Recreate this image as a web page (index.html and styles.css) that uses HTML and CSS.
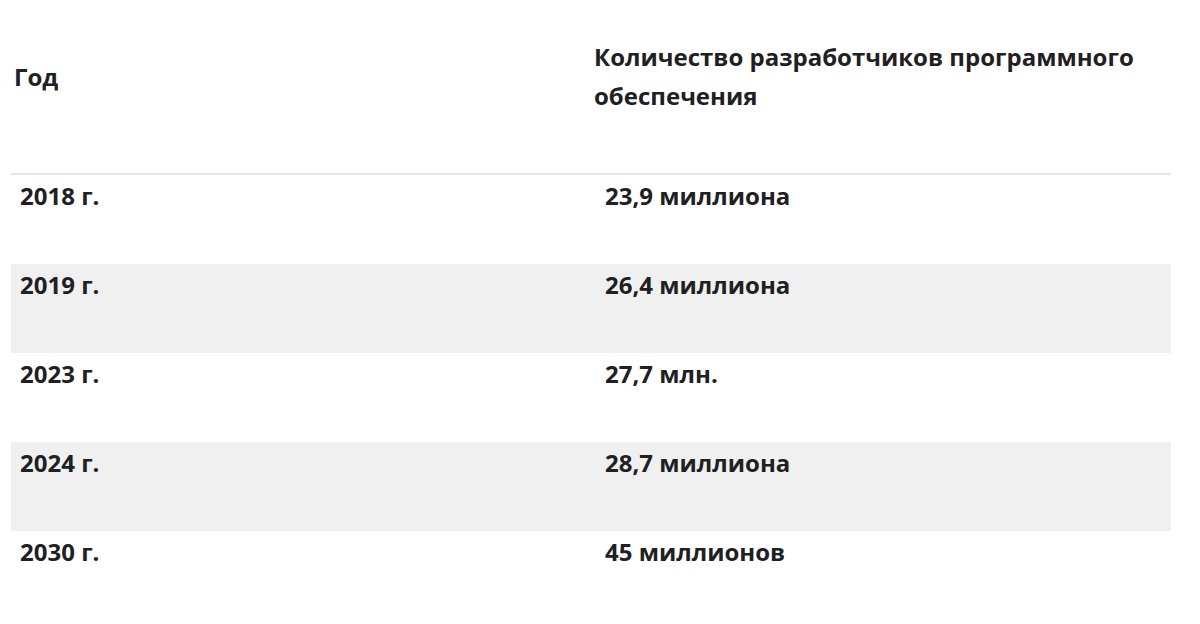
FILE: index.html
```html
<!DOCTYPE html>
<html lang="ru">
<head>
<meta charset="utf-8">
<title>Разработчики</title>
<link rel="stylesheet" href="styles.css">
</head>
<body>
<div class="wrap">
<table class="devs">
  <thead>
    <tr>
      <th class="c1">Год</th>
      <th class="c2">Количество разработчиков программного обеспечения</th>
    </tr>
  </thead>
  <tbody>
    <tr><td class="c1">2018 г.</td><td class="c2">23,9 миллиона</td></tr>
    <tr class="alt"><td class="c1">2019 г.</td><td class="c2">26,4 миллиона</td></tr>
    <tr><td class="c1">2023 г.</td><td class="c2">27,7 млн.</td></tr>
    <tr class="alt"><td class="c1">2024 г.</td><td class="c2">28,7 миллиона</td></tr>
    <tr><td class="c1">2030 г.</td><td class="c2">45 миллионов</td></tr>
  </tbody>
</table>
</div>
</body>
</html>
```
FILE: styles.css
```css
html, body {
  margin: 0;
  padding: 0;
  background: #fff;
}
.wrap {
  padding-left: 11px;
}
.devs {
  width: 1160px;
  border-collapse: collapse;
  font-family: "Open Sans", "Liberation Sans", sans-serif;
  font-weight: 700;
  font-size: 24px;
  line-height: 39px;
  color: #1f2023;
  table-layout: fixed;
}
.devs th {
  text-align: left;
  vertical-align: middle;
  height: 152px;
  padding: 0 3px 21px 3px;
  border-bottom: 2px solid #e6e6e6;
}
.devs th.c1 {
  width: 574px;
}
.devs td {
  vertical-align: top;
  height: 88px;
  padding: 1px 9px 0 9px;
}
.devs td.c2 {
  padding-left: 14px;
}
.devs tr.alt td {
  background: #f0f0f0;
}
```
